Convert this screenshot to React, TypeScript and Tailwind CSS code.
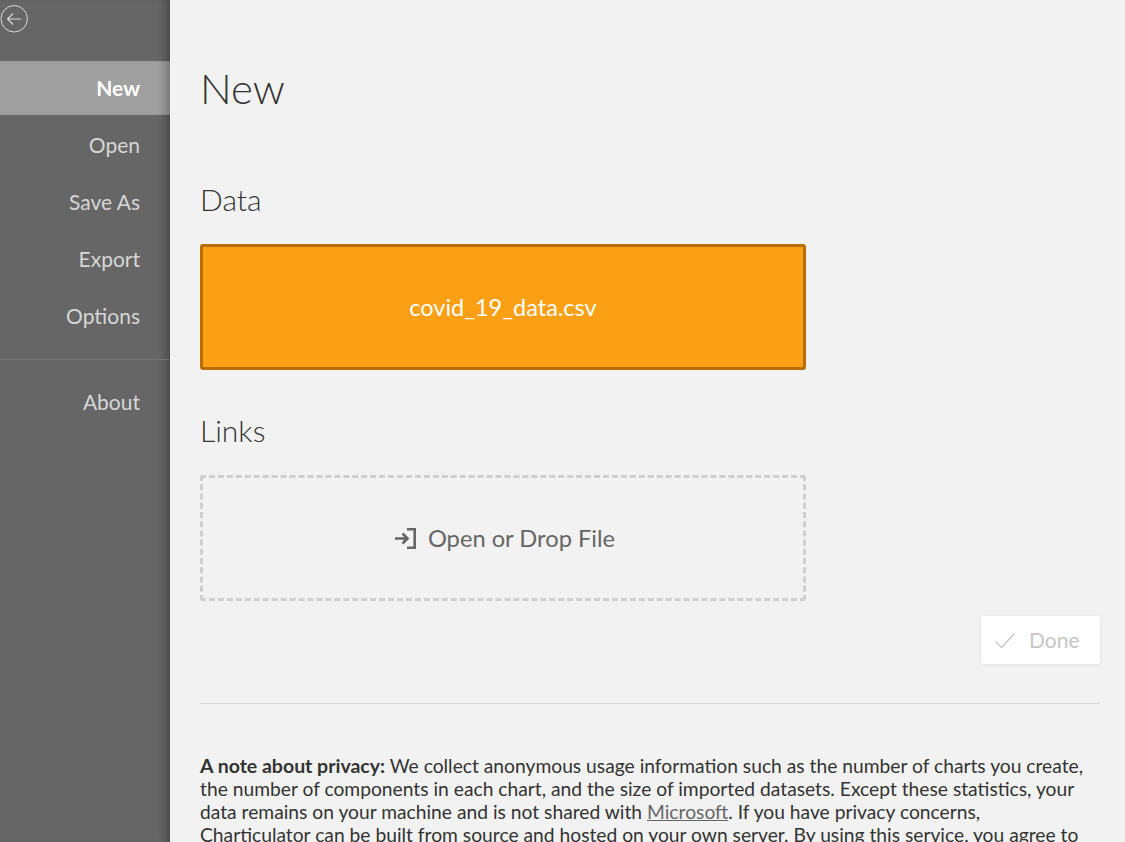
import React from "react";

const items = ["Open", "Save As", "Export", "Options"];

export default function App() {
  return (
    <div className="flex h-[842px] w-[1125px] overflow-hidden bg-[#f2f2f2] font-['Lato',sans-serif] text-[#333]">
      <aside className="w-[170px] shrink-0 bg-[#666666] shadow-[inset_-10px_0_10px_-6px_rgba(0,0,0,0.3)]">
        <div className="h-[61px] pt-[5px]">
          <svg width="28" height="28" viewBox="0 0 28 28" fill="none" stroke="#d9d9d9" strokeWidth="1">
            <circle cx="14.2" cy="13.8" r="13.2" />
            <path d="M21 14H7.5M13 8.5L7.5 14L13 19.5" strokeWidth="1.2" />
          </svg>
        </div>
        <nav className="flex flex-col gap-[3px]">
          <div className="flex h-[54px] items-center justify-end bg-[#a0a0a0] pr-[30px] text-[21px] font-bold text-white shadow-[inset_-10px_0_10px_-6px_rgba(0,0,0,0.3)]">
            New
          </div>
          {items.map((t) => (
            <div key={t} className="flex h-[54px] items-center justify-end pr-[30px] text-[21px] text-[#d6d6d6]">
              {t}
            </div>
          ))}
        </nav>
        <div className="mt-[16px] mr-[1px] h-px bg-[#757575]" />
        <div className="mt-[15px] flex h-[54px] items-center justify-end pr-[30px] text-[21px] text-[#d6d6d6]">
          About
        </div>
      </aside>

      <main className="w-[955px] shrink-0 pl-[30px] pr-[25px]">
        <h1 className="mt-[61px] h-[54px] text-[42px] leading-[54px] font-light text-[#333]">New</h1>
        <h2 className="mt-[65px] h-[38px] text-[30px] leading-[38px] font-light text-[#333]">Data</h2>
        <div className="mt-[26px] flex h-[126px] w-[606px] items-center justify-center rounded-[3px] border-[3px] border-[#b86e05] bg-[#fba015] text-[23.5px] text-white">
          <span className="pt-[2px]">covid_19_data.csv</span>
        </div>
        <h2 className="mt-[41px] h-[38px] text-[30px] leading-[38px] font-light text-[#333]">Links</h2>
        <div className="mt-[26px] flex h-[126px] w-[606px] items-center justify-center gap-[12px] rounded-[3px] border-[3px] border-dashed border-[#cfcfcf] pl-[4px] text-[23.7px] text-[#666]">
          <svg width="21" height="21" viewBox="0 0 21 21" fill="none" stroke="#666" strokeWidth="2.6">
            <path d="M0 10.5H12M7.5 5.5L12.5 10.5L7.5 15.5" />
            <path d="M12 1.3H19.7V19.7H12" />
          </svg>
          <span className="pt-[2px]">Open or Drop File</span>
        </div>
        <div className="mt-[15px] flex justify-end">
          <div className="flex h-[48px] w-[119px] items-center gap-[14px] rounded-[3px] bg-white pl-[14px] text-[21px] text-[#c8c6c4] shadow-[0_1px_4px_rgba(0,0,0,0.08)]">
            <svg width="20" height="15" viewBox="0 0 20 15" fill="none" stroke="#c8c6c4" strokeWidth="1.3">
              <path d="M0.5 8.5L6.5 14.5L19.5 0.5" />
            </svg>
            <span>Done</span>
          </div>
        </div>
        <div className="mt-[39px] h-px bg-[#d9d9d9]" />
        <p className="mt-[50px] w-[890px] text-[19.24px] leading-[23px] text-[#333]">
          <strong className="text-[19.5px] font-bold">A note about privacy:</strong> We collect anonymous usage information such as the number of charts you create, the number of components in each chart, and the size of imported datasets. Except these statistics, your data remains on your machine and is not shared with <a className="text-[#666] underline">Microsoft</a>. If you have privacy concerns, Charticulator can be built from source and hosted on your own server. By using this service, you agree to
        </p>
      </main>
    </div>
  );
}
